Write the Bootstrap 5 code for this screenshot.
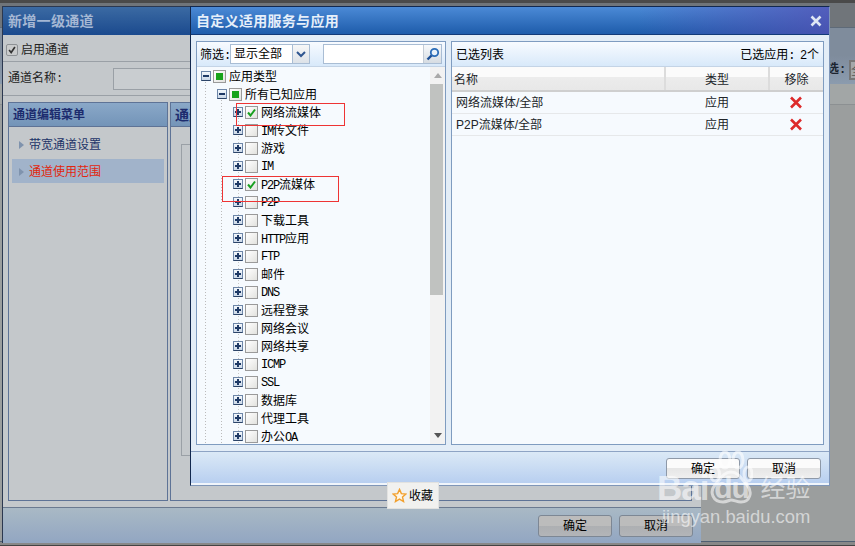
<!DOCTYPE html>
<html lang="zh-CN">
<head>
<meta charset="UTF-8">
<meta name="viewport" content="width=device-width, initial-scale=1.0">
<title>自定义适用服务与应用</title>
<link href="https://cdn.jsdelivr.net/npm/bootstrap@5.3.0/dist/css/bootstrap.min.css" rel="stylesheet">
<style>
    body {
        width: 855px;
        height: 546px;
        overflow: hidden;
        position: relative;
        background: #9b9e9e;
        font-family: "Liberation Sans", "Noto Sans CJK SC", sans-serif;
        font-size: 12px;
        line-height: 18px;
        color: #000;
    }

    .lat { font-family: "Liberation Mono", monospace; font-size: 12px; letter-spacing: -1.2px; white-space: pre; }

    /* page behind the windows */
    .app-top { height: 3px; background: #4a4a4a; }
    .app-head { height: 24px; background: #70757a; }
    .app-band { height: 28px; background: #7f8c9c; border-top: 1px solid #5e6a78; }
    .app-filter { height: 29px; background: linear-gradient(#7f8c9c, #8b9bae); color: #1c2430; font-weight: 700; }
    .app-sel { width: 20px; height: 20px; margin-right: -14px; background: #a4a8aa; border: 2px solid #777; color: #555; font-weight: 400; overflow: hidden; }
    .app-cells { height: 21px; background: #a2a6a6; border-bottom: 1px solid #8c9092; }
    .app-foot { position: absolute; left: 0; right: 0; bottom: 0; height: 5px; background: #888; border-top: 1px solid #4f5f72; border-bottom: 1px solid #444; }

    /* windows */
    .win-back, .win-main { position: absolute; display: flex; flex-direction: column; }
    .win-back { left: 2px; top: 6px; width: 699px; height: 537px; background: #c4c8cb; border: solid #2b3850; border-width: 1px 0 0 1px; }
    .win-main { left: 190px; top: 6px; width: 640px; height: 480px; background: #e3edf7; border: 1px solid #7f96b8; border-top-color: #12284e; border-left-color: #12284e; }

    .back-title { height: 28px; padding-left: 5px; font-size: 14px; font-weight: 700; line-height: 28px; letter-spacing: .3px; color: #a5b8d4; background: linear-gradient(#3b6aa3, #1b4a8e); }
    .main-title { height: 28px; padding: 0 7px 0 5px; font-size: 14px; font-weight: 700; line-height: 28px; letter-spacing: .3px; color: #e6effa;
        background: linear-gradient(90deg, rgba(90, 90, 190, 0) 70%, rgba(85, 80, 180, .75) 100%), linear-gradient(#4b8ad6, #1e5cab); border-bottom: 1px solid #123a78; }
    .main-x { width: 12px; height: 12px; }

    .back-row1 { height: 27px; padding: 4px 0 0 3px; border-bottom: 1px solid #9aa0a6; color: #222; }
    .back-chk { width: 12px; height: 12px; margin: 0 3px 0 0; background: #c9cbcc; border: 1px solid #8d9195; border-radius: 2px; }
    .back-row2 { height: 34px; padding-left: 5px; border-bottom: 1px solid #9aa0a6; color: #222; }
    .back-input { width: 300px; height: 22px; margin-left: 51px; background: #c9cdd0; border: 1px solid #9aa0a6; }
    .back-body { height: 405px; padding: 6px 9px 0 5px; gap: 2px; }
    .side-panel { width: 160px; border: 1px solid #5e7396; }
    .work-panel { flex: 1; border: 1px solid #5e7396; }
    .panel-cap { height: 24px; padding-left: 4px; font-size: 12px; font-weight: 700; line-height: 24px; color: #1d2c6e; background: linear-gradient(#8aa8c8, #7394b8); border-bottom: 1px solid #5e7396; }
    .work-panel .panel-cap { font-size: 14px; }
    .side-item { height: 24px; margin: 6px 3px 0; padding-left: 7px; color: #1d3468; }
    .side-item.on { margin-top: 2px; padding-top: 2px; background: #a1b3ca; color: #e1260e; }
    .side-arrow { width: 0; height: 0; margin-right: 5px; border: 4px solid transparent; border-left: 5px solid #7f93ad; border-right: 0; }
    .work-box { height: 312px; margin: 17px 10px 0; border: 1px solid #9aa0a6; }
    .back-foot { flex: 1; margin-top: 6px; padding: 7px 8px 0 0; gap: 7px; background: linear-gradient(#a9b9c5, #92a6c2); border-top: 1px solid #6b7a90; }

    .dlg-btn { width: 74px; height: 22px; padding: 0; font-size: 12px; line-height: 20px; color: #000; border: 1px solid #8e99a8; border-radius: 3px; background: linear-gradient(#fbfbfb 50%, #e6e6e6 50%, #efefef); }
    .back-foot .dlg-btn { background: linear-gradient(#bcbcbc 50%, #adafb2 50%, #b3b5b8); border-color: #7d8794; }

    .main-body { height: 416px; padding: 6px 5px 6px; gap: 5px; }
    .tree-panel { width: 250px; background: #f6fafe; border: 1px solid #7f9cc0; }
    .pick-panel { width: 373px; background: #f6fafe; border: 1px solid #7f9cc0; }
    .panel-head { height: 25px; padding: 0 4px; background: linear-gradient(#f8fbff, #d8e9fa); border-bottom: 1px solid #c4d4e6; }
    .tree-panel .panel-head { padding-left: 3px; }
    .pick-panel .panel-head { padding-top: 2px; }
    .filter-label { flex: none; padding-top: 2px; white-space: nowrap; }
    .filter-sel { flex: none; width: 80px; height: 20px; margin: 0 13px 0 0; padding-left: 3px; background: #fff; border: 1px solid #a9bdd4; }
    .filter-drop { width: 17px; height: 18px; background: linear-gradient(#f7f7f7, #dde2e8); border-left: 1px solid #a9bdd4; }
    .filter-search { flex: none; width: 119px; height: 20px; background: #fff; border: 1px solid #a9bdd4; }
    .filter-go { width: 18px; height: 18px; background: linear-gradient(#f7f9fb, #d6dce2); border-left: 1px solid #c4ccd6; }

    .tree-scroll { width: 233px; height: 377px; overflow: hidden;
        background-image: repeating-linear-gradient(#bbb 0 1px, transparent 1px 3px), repeating-linear-gradient(#bbb 0 1px, transparent 1px 3px), repeating-linear-gradient(#c8c8c8 0 1px, transparent 1px 3px);
        background-size: 1px 100%;
        background-position: 8px 15px, 24px 33px, 41px 51px;
        background-repeat: no-repeat; }
    .tree-row { height: 18px; margin: 0; padding-top: 2px; }
    .tree-lv0 { padding-left: 4px; }
    .tree-lv1 { padding-left: 20px; }
    .tree-lv2 { padding-left: 36px; }
    .tree-exp { position: relative; width: 10px; height: 10px; margin: -2px 2px 0 0; background: linear-gradient(#f4f8fc, #cbd8e8); border: 1px solid #6d86a8; border-bottom-color: #2c4468; flex: none; }
    .tree-exp::before { content: ""; position: absolute; left: 1px; top: 3px; width: 6px; height: 2px; background: #1f3a66; }
    .tree-exp.plus::after { content: ""; position: absolute; left: 3px; top: 1px; width: 2px; height: 6px; background: #1f3a66; }
    .tree-box { width: 13px; height: 13px; margin: -2px 3px 0 0; background: linear-gradient(135deg, #fff, #e2e2de); border: 1px solid #9a9a9a; flex: none; }
    .tree-fill { width: 7px; height: 7px; background: #17a31b; }
    .tree-tick { width: 9px; height: 9px; }

    .bar-col { width: 15px; background: #f2f2f2; }
    .bar-up { height: 17px; }
    .bar-tri-up { border: 4px solid transparent; border-top: 0; border-bottom: 5px solid #a9a9a9; }
    .bar-tri-dn { border: 4px solid transparent; border-bottom: 0; border-top: 5px solid #555; }
    .bar-thumb { width: 13px; height: 211px; background: #c0c2c0; }

    .pick-table { --bs-table-bg: transparent; table-layout: fixed; font-size: 12px; }
    .pick-table th { height: 24px; padding: 2px 2px 0; font-weight: 400; line-height: 20px; vertical-align: middle; background: linear-gradient(#fbfbfb 45%, #ececec 45%, #e8e8e8); border: 0; border-right: 2px solid #dcdcdc; border-bottom: 2px solid #cfcfcf; }
    .pick-table th:last-child { border-right: 0; }
    .pick-table td { height: 22px; padding: 2px 4px 0; line-height: 19px; vertical-align: middle; border: 0; border-bottom: 1px solid #e6e8ea; }
    .pick-table td.del-cell { padding-top: 0; }
    .pick-w1 { width: 213px; }
    .pick-w2 { width: 104px; }
    .del-x { width: 14px; height: 13px; display: block; margin: 0 auto; }

    .main-foot { flex: 1; padding: 6px 8px 0 0; gap: 7px; background: linear-gradient(#dbe9f6, #b8cff0); border-top: 1px solid #8ea4c4; border-bottom: 2px solid #f0f5fb; }
    .main-foot .dlg-btn { height: 21px; }

    /* things lying over the windows */
    .mark-red { position: absolute; border: 1px solid #ee3434; }
    .mark-a { left: 236px; top: 103px; width: 109px; height: 23px; }
    .mark-b { left: 222px; top: 176px; width: 117px; height: 26px; }
    .fav-box { position: absolute; left: 387px; top: 482px; width: 52px; height: 27px; padding-left: 4px; gap: 2px; background: #f1f1ef; border: 1px solid #e2e2e0; font-size: 12px; }
    .fav-star { width: 15px; height: 15px; }

    .wm-box { position: absolute; left: 657px; top: 470px; width: 160px; color: rgba(255, 255, 255, .58); pointer-events: none; }
    .wm-top { height: 36px; font-size: 35px; line-height: 36px; font-weight: 700; letter-spacing: -1px; }
    .wm-du { position: relative; width: 46px; margin-left: 0; font-size: 30px; text-align: center; }
    .wm-paw { position: absolute; left: 1px; top: -20px; width: 44px; height: 56px; }
    .wm-jy { margin-left: 6px; font-size: 25px; font-weight: 400; letter-spacing: 0; }
    .wm-url { padding-left: 5px; font-size: 18.4px; line-height: 22px; white-space: nowrap; }
</style>
</head>
<body>
    <svg width="0" height="0" class="position-absolute">
        <symbol id="ico-tick" viewBox="0 0 9 9"><path d="M1 4.5 3.5 7.5 8 1.5" fill="none" stroke="#18a020" stroke-width="2"/></symbol>
        <symbol id="ico-del" viewBox="0 0 14 13"><path d="M2 1.5 12 11.5M12 1.5 2 11.5" fill="none" stroke="#dd2a2a" stroke-width="2.6"/></symbol>
    </svg>

    <div class="app-top"></div>
    <div class="app-head"></div>
    <div class="app-band"></div>
    <div class="app-filter d-flex justify-content-end align-items-center gap-1"><span>选<span class="lat">:</span></span><span class="app-sel">全</span></div>
    <div class="app-cells"></div>
    <div class="app-foot"></div>

    <div class="win-back">
        <div class="back-title">新增一级通道</div>
        <div class="back-row1 d-flex align-items-center">
            <svg class="back-chk" viewBox="0 0 12 12"><path d="M2.5 6 5 9 9.5 2.5" fill="none" stroke="#333" stroke-width="2"/></svg>
            <span>启用通道</span>
        </div>
        <div class="back-row2 d-flex align-items-center">
            <span>通道名称<span class="lat">:</span></span>
            <div class="back-input"></div>
        </div>
        <div class="back-body d-flex">
            <div class="side-panel">
                <div class="panel-cap">通道编辑菜单</div>
                <div class="side-item d-flex align-items-center"><i class="side-arrow"></i>带宽通道设置</div>
                <div class="side-item on d-flex align-items-center"><i class="side-arrow"></i>通道使用范围</div>
            </div>
            <div class="work-panel">
                <div class="panel-cap">通道使用范围</div>
                <div class="work-box"></div>
            </div>
        </div>
        <div class="back-foot d-flex justify-content-end">
            <button type="button" class="btn dlg-btn">确定</button>
            <button type="button" class="btn dlg-btn">取消</button>
        </div>
    </div>

    <div class="win-main">
        <div class="main-title d-flex justify-content-between align-items-center">
            <span>自定义适用服务与应用</span>
            <svg class="main-x" viewBox="0 0 12 12"><path d="M1.5 1.5 10.5 10.5M10.5 1.5 1.5 10.5" stroke="#dfe6f4" stroke-width="2.6"/></svg>
        </div>
        <div class="main-body d-flex">
            <div class="tree-panel">
                <div class="panel-head d-flex align-items-center">
                    <span class="filter-label">筛选<span class="lat">:</span></span>
                    <div class="filter-sel d-flex justify-content-between align-items-center">
                        <span>显示全部</span>
                        <span class="filter-drop d-flex justify-content-center align-items-center">
                            <svg width="10" height="7" viewBox="0 0 10 7"><path d="M1 1 5 5 9 1" fill="none" stroke="#2f5590" stroke-width="2"/></svg>
                        </span>
                    </div>
                    <div class="filter-search d-flex justify-content-end">
                        <span class="filter-go d-flex justify-content-center align-items-center">
                            <svg width="14" height="14" viewBox="0 0 14 14"><circle cx="8.5" cy="5.5" r="3.7" fill="#e8f2fb" stroke="#2a6cb8" stroke-width="1.8"/><path d="M5.5 8.5 1.5 12.5" stroke="#1d4f96" stroke-width="2.4"/></svg>
                        </span>
                    </div>
                </div>
                <div class="d-flex">
                    <div class="tree-scroll">
                        <div class="tree-row tree-lv0 d-flex align-items-center"><i class="tree-exp"></i><span class="tree-box d-flex justify-content-center align-items-center"><i class="tree-fill"></i></span>应用类型</div>
                        <div class="tree-row tree-lv1 d-flex align-items-center"><i class="tree-exp"></i><span class="tree-box d-flex justify-content-center align-items-center"><i class="tree-fill"></i></span>所有已知应用</div>
                        <div class="tree-row tree-lv2 d-flex align-items-center"><i class="tree-exp plus"></i><span class="tree-box d-flex justify-content-center align-items-center"><svg class="tree-tick"><use href="#ico-tick"/></svg></span>网络流媒体</div>
                        <div class="tree-row tree-lv2 d-flex align-items-center"><i class="tree-exp plus"></i><span class="tree-box"></span><span><span class="lat">IM</span>传文件</span></div>
                        <div class="tree-row tree-lv2 d-flex align-items-center"><i class="tree-exp plus"></i><span class="tree-box"></span>游戏</div>
                        <div class="tree-row tree-lv2 d-flex align-items-center"><i class="tree-exp plus"></i><span class="tree-box"></span><span class="lat">IM</span></div>
                        <div class="tree-row tree-lv2 d-flex align-items-center"><i class="tree-exp plus"></i><span class="tree-box d-flex justify-content-center align-items-center"><svg class="tree-tick"><use href="#ico-tick"/></svg></span><span><span class="lat">P2P</span>流媒体</span></div>
                        <div class="tree-row tree-lv2 d-flex align-items-center"><i class="tree-exp plus"></i><span class="tree-box"></span><span class="lat">P2P</span></div>
                        <div class="tree-row tree-lv2 d-flex align-items-center"><i class="tree-exp plus"></i><span class="tree-box"></span>下载工具</div>
                        <div class="tree-row tree-lv2 d-flex align-items-center"><i class="tree-exp plus"></i><span class="tree-box"></span><span><span class="lat">HTTP</span>应用</span></div>
                        <div class="tree-row tree-lv2 d-flex align-items-center"><i class="tree-exp plus"></i><span class="tree-box"></span><span class="lat">FTP</span></div>
                        <div class="tree-row tree-lv2 d-flex align-items-center"><i class="tree-exp plus"></i><span class="tree-box"></span>邮件</div>
                        <div class="tree-row tree-lv2 d-flex align-items-center"><i class="tree-exp plus"></i><span class="tree-box"></span><span class="lat">DNS</span></div>
                        <div class="tree-row tree-lv2 d-flex align-items-center"><i class="tree-exp plus"></i><span class="tree-box"></span>远程登录</div>
                        <div class="tree-row tree-lv2 d-flex align-items-center"><i class="tree-exp plus"></i><span class="tree-box"></span>网络会议</div>
                        <div class="tree-row tree-lv2 d-flex align-items-center"><i class="tree-exp plus"></i><span class="tree-box"></span>网络共享</div>
                        <div class="tree-row tree-lv2 d-flex align-items-center"><i class="tree-exp plus"></i><span class="tree-box"></span><span class="lat">ICMP</span></div>
                        <div class="tree-row tree-lv2 d-flex align-items-center"><i class="tree-exp plus"></i><span class="tree-box"></span><span class="lat">SSL</span></div>
                        <div class="tree-row tree-lv2 d-flex align-items-center"><i class="tree-exp plus"></i><span class="tree-box"></span>数据库</div>
                        <div class="tree-row tree-lv2 d-flex align-items-center"><i class="tree-exp plus"></i><span class="tree-box"></span>代理工具</div>
                        <div class="tree-row tree-lv2 d-flex align-items-center"><i class="tree-exp plus"></i><span class="tree-box"></span><span>办公<span class="lat">OA</span></span></div>
                    </div>
                    <div class="bar-col d-flex flex-column">
                        <div class="bar-up d-flex justify-content-center align-items-center"><i class="bar-tri-up"></i></div>
                        <div class="bar-thumb"></div>
                        <div class="bar-up d-flex justify-content-center align-items-center mt-auto"><i class="bar-tri-dn"></i></div>
                    </div>
                </div>
            </div>
            <div class="pick-panel">
                <div class="panel-head d-flex justify-content-between align-items-center">
                    <span>已选列表</span>
                    <span>已选应用<span class="lat">: </span>2个</span>
                </div>
                <table class="table mb-0 pick-table">
                    <thead>
                        <tr>
                            <th class="pick-w1">名称</th>
                            <th class="pick-w2 text-center">类型</th>
                            <th class="text-center">移除</th>
                        </tr>
                    </thead>
                    <tbody>
                        <tr>
                            <td>网络流媒体/全部</td>
                            <td class="text-center">应用</td>
                            <td class="del-cell"><svg class="del-x"><use href="#ico-del"/></svg></td>
                        </tr>
                        <tr>
                            <td>P2P流媒体/全部</td>
                            <td class="text-center">应用</td>
                            <td class="del-cell"><svg class="del-x"><use href="#ico-del"/></svg></td>
                        </tr>
                    </tbody>
                </table>
            </div>
        </div>
        <div class="main-foot d-flex justify-content-end">
            <button type="button" class="btn dlg-btn">确定</button>
            <button type="button" class="btn dlg-btn">取消</button>
        </div>
    </div>

    <div class="mark-red mark-a"></div>
    <div class="mark-red mark-b"></div>

    <div class="fav-box d-flex align-items-center">
        <svg class="fav-star" viewBox="0 0 16 16"><path d="M8 1.5 10 6 14.8 6.4 11.2 9.6 12.3 14.4 8 11.9 3.7 14.4 4.8 9.6 1.2 6.4 6 6Z" fill="#fff7e6" stroke="#f2a02e" stroke-width="1.5"/></svg>
        <span>收藏</span>
    </div>

    <div class="wm-box">
        <div class="wm-top d-flex">
            <span>Bai</span>
            <span class="wm-du">du
                <svg class="wm-paw" viewBox="0 0 44 56">
                    <g fill="none" stroke="rgba(255,255,255,.58)" stroke-width="3">
                        <ellipse cx="6" cy="24" rx="4.5" ry="7"/>
                        <ellipse cx="16" cy="10" rx="5" ry="8"/>
                        <ellipse cx="29" cy="10" rx="5" ry="8"/>
                        <ellipse cx="39" cy="24" rx="4" ry="7"/>
                        <path d="M22 22C14 22 11 30 6 35 0 42 4 52 14 52 18 52 20 50 22 50 25 50 28 52 32 52 41 52 44 42 38 35 33 30 30 22 22 22Z"/>
                    </g>
                </svg>
            </span>
            <span class="wm-jy">经验</span>
        </div>
        <div class="wm-url">jingyan.baidu.com</div>
    </div>

    <script src="https://cdn.jsdelivr.net/npm/bootstrap@5.3.0/dist/js/bootstrap.bundle.min.js"></script>
</body>
</html>
